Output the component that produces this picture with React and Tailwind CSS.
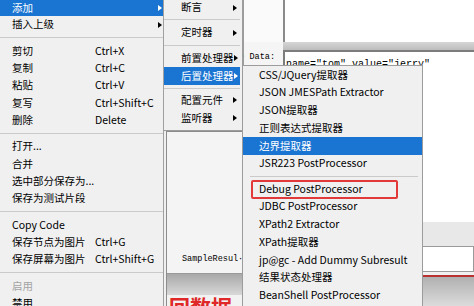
import React from 'react';

function Arrow({ white }) {
  return (
    <span
      className={
        white
          ? 'block w-0 h-0 border-y-[3.5px] border-y-transparent border-l-[4px] border-l-white'
          : 'block w-0 h-0 border-y-[3.5px] border-y-transparent border-l-[4px] border-l-black'
      }
    />
  );
}

const menu1 = [
  { label: '添加', arrow: true, hl: true, first: true },
  { label: '插入上级', arrow: true },
  { sep: true },
  { label: '剪切', k: 'Ctrl+X' },
  { label: '复制', k: 'Ctrl+C' },
  { label: '粘贴', k: 'Ctrl+V' },
  { label: '复写', k: 'Ctrl+Shift+C' },
  { label: '删除', k: 'Delete' },
  { sep: true },
  { label: '打开...' },
  { label: '合并' },
  { label: '选中部分保存为...' },
  { label: '保存为测试片段' },
  { sep: true },
  { label: 'Copy Code' },
  { label: '保存节点为图片', k: 'Ctrl+G' },
  { label: '保存屏幕为图片', k: 'Ctrl+Shift+G' },
  { sep: true },
  { label: '启用', disabled: true },
  { label: '禁用' },
];

const menu3 = [
  { label: 'CSS/JQuery提取器' },
  { label: 'JSON JMESPath Extractor' },
  { label: 'JSON提取器' },
  { label: '正则表达式提取器' },
  { label: '边界提取器', hl: true },
  { label: 'JSR223 PostProcessor' },
  { sep: true },
  { label: 'Debug PostProcessor', boxed: true },
  { label: 'JDBC PostProcessor' },
  { label: 'XPath2 Extractor' },
  { label: 'XPath提取器' },
  { label: 'jp@gc - Add Dummy Subresult' },
  { label: '结果状态处理器' },
  { label: 'BeanShell PostProcessor' },
];

function Sep({ h, cls }) {
  return (
    <div className={`flex items-center ${h}`}>
      <div className={`w-full border-t border-[#cacaca] ${cls || ''}`} />
    </div>
  );
}

export default function App() {
  return (
    <div className="relative w-[474px] h-[306px] overflow-hidden bg-[#f0f0f0] font-['Noto_Sans_CJK_SC',sans-serif] text-[10.5px] text-black">
      {/* background window content */}
      <div className="flex h-full">
        <div className="w-[164px] shrink-0" />
        {/* middle column */}
        <div className="w-[79px] shrink-0 flex flex-col">
          <div className="h-[131px] shrink-0" />
          <div className="flex-1 flex flex-col ml-[2px] border-l border-t border-[#8c8c8c]">
            <div className="h-[141px] shrink-0 bg-[#f4f4f4] flex items-end pb-[10px] pl-[15px]">
              <span className="font-['Liberation_Mono',monospace] text-[8.5px] leading-none whitespace-nowrap">SampleResul·</span>
            </div>
            <div className="h-[22px] shrink-0 border-t border-[#9a9a9a] bg-gradient-to-b from-[#a9a9a9] to-[#d8d8d8]" />
            <div className="flex-1 bg-[#f2f2f2] pl-[2px] pt-[1px]">
              <span className="block text-[21px] leading-none font-bold text-[#e02828] whitespace-nowrap">回数据</span>
            </div>
          </div>
        </div>
        {/* right column */}
        <div className="flex-1 flex flex-col">
          <div className="h-[42px] shrink-0 flex">
            <div className="w-[40px] bg-[#fafafa]" />
            <div className="flex-1 bg-white border-l-2 border-[#8a8a8a]" />
          </div>
          <div className="h-[8px] shrink-0 flex">
            <div className="w-[40px] bg-[#f5f5f5]" />
            <div className="flex-1 bg-gradient-to-b from-[#d6d6d6] to-[#bdbdbd]" />
          </div>
          <div className="h-[172px] shrink-0 flex">
            <div className="w-[40px] bg-[#f5f5f5] flex justify-end pr-[8px] pt-[3px]">
              <span className="font-['Liberation_Mono',monospace] text-[8.5px] leading-none whitespace-nowrap">Response Data:</span>
            </div>
            <div className="flex-1 bg-white border-l-2 border-t-2 border-[#7c7c7c] pl-[1px] pt-[3px]">
              <span className="font-['Liberation_Mono',monospace] text-[10px] leading-none whitespace-nowrap">name="tom" value="jerry"</span>
            </div>
          </div>
          <div className="h-[24px] shrink-0 bg-[#e8e8e8]" />
          <div className="h-[26px] shrink-0 bg-white border border-[#9a9a9a] flex items-center pl-[1px]">
            <span className="font-['Liberation_Mono',monospace] text-[8.5px] leading-none whitespace-nowrap">SampleResult</span>
          </div>
          <div className="h-[3px] shrink-0 bg-[#f0f0f0]" />
          <div className="h-[2px] shrink-0 bg-[#b83030]" />
          <div className="flex-1 bg-gradient-to-b from-[#b0b0b0] to-[#dcdcdc]" />
        </div>
      </div>

      {/* menu 1 */}
      <div className="absolute left-0 top-0 w-[164px] h-[320px] bg-[#f0f0f0] border-r border-[#a0a0a0] flex flex-col">
        {menu1.map((it, i) =>
          it.sep ? (
            <Sep key={i} h="h-[9.25px]" />
          ) : (
            <div
              key={i}
              className={`flex items-center shrink-0 pl-[12px] pr-[1px] leading-none ${it.first ? 'h-[16px]' : 'h-[17.25px]'} ${it.hl ? 'bg-[#1a74d2] text-white' : ''} ${it.disabled ? 'text-[#a3a3a3]' : ''}`}
            >
              <span className="w-[83px] shrink-0 whitespace-nowrap">{it.label}</span>
              {it.k && <span className="whitespace-nowrap">{it.k}</span>}
              {it.arrow && (
                <span className="ml-auto">
                  <Arrow white={it.hl} />
                </span>
              )}
            </div>
          )
        )}
      </div>

      {/* menu 2 */}
      <div className="absolute left-[164px] top-0 w-[80px] h-[131px] bg-[#f0f0f0] border-r-2 border-b border-[#9c9c9c] flex flex-col pr-[2px]">
        <div className="h-[15px] shrink-0 flex items-center pl-[17px] pr-[3px] leading-none">
          <span className="whitespace-nowrap">断言</span>
          <span className="ml-auto"><Arrow /></span>
        </div>
        <Sep h="h-[9px]" />
        <div className="h-[17px] shrink-0 flex items-center pl-[17px] pr-[3px] leading-none">
          <span className="whitespace-nowrap">定时器</span>
          <span className="ml-auto"><Arrow /></span>
        </div>
        <Sep h="h-[8px]" />
        <div className="h-[18px] shrink-0 flex items-center pl-[17px] pr-[3px] leading-none">
          <span className="whitespace-nowrap">前置处理器</span>
          <span className="ml-auto"><Arrow /></span>
        </div>
        <div className="h-[18px] shrink-0 flex items-center pl-[17px] pr-[3px] leading-none bg-[#1a74d2] text-white">
          <span className="whitespace-nowrap">后置处理器</span>
          <span className="ml-auto"><Arrow white /></span>
        </div>
        <Sep h="h-[6px]" />
        <div className="h-[18px] shrink-0 flex items-center pl-[17px] pr-[3px] leading-none">
          <span className="whitespace-nowrap">配置元件</span>
          <span className="ml-auto"><Arrow /></span>
        </div>
        <div className="h-[18px] shrink-0 flex items-center pl-[17px] pr-[3px] leading-none">
          <span className="whitespace-nowrap">监听器</span>
          <span className="ml-auto"><Arrow /></span>
        </div>
      </div>

      {/* menu 3 */}
      <div className="absolute left-[242px] top-[65px] w-[181px] h-[260px] bg-[#f0f0f0] border border-[#9c9c9c] flex flex-col">
        {menu3.map((it, i) =>
          it.sep ? (
            <Sep key={i} h="h-[7.5px] pl-[7px] pr-[4px]" />
          ) : (
            <div
              key={i}
              className={`relative flex items-center shrink-0 h-[17.75px] pl-[16px] leading-none whitespace-nowrap ${it.hl ? 'bg-[#1a74d2] text-white' : ''}`}
            >
              {it.label}
              {it.boxed && (
                <span className="absolute left-[8px] top-0 w-[147px] h-[19px] border-2 border-[#e23a3a] rounded-[2px]" />
              )}
            </div>
          )
        )}
      </div>
    </div>
  );
}
